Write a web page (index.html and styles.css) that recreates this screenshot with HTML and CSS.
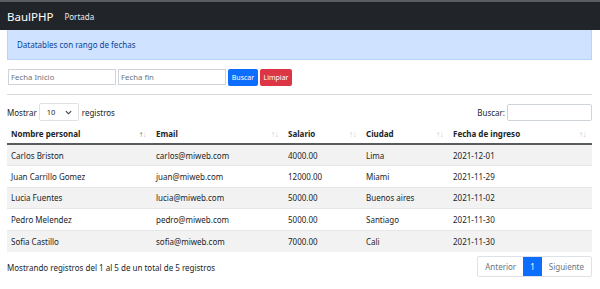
FILE: index.html
```html
<!DOCTYPE html>
<html lang="es">
<head>
<meta charset="utf-8">
<link rel="stylesheet" href="styles.css">
</head>
<body>
<nav class="navbar">
  <span class="brand">BaulPHP</span>
  <span class="nav-link">Portada</span>
</nav>
<div class="container">
  <div class="alert">Datatables con rango de fechas</div>
  <div class="filters">
    <input class="field" placeholder="Fecha Inicio">
    <input class="field" placeholder="Fecha fin">
    <button class="btn btn-primary">Buscar</button>
    <button class="btn btn-danger">Limpiar</button>
  </div>
  <hr class="sep">
  <div class="top-row">
    <div class="length">Mostrar <span class="select">10 <svg width="7" height="5" viewBox="0 0 8 5"><path d="M1 1l3 3 3-3" fill="none" stroke="#343a40" stroke-width="1.3"/></svg></span> registros</div>
    <div class="search">Buscar: <span class="search-input"></span></div>
  </div>
  <table class="table">
    <thead>
      <tr>
        <th class="c1"><span>Nombre personal</span><span class="sort active">↑<i>↓</i></span></th>
        <th class="c2"><span>Email</span><span class="sort">↑↓</span></th>
        <th class="c3"><span>Salario</span><span class="sort">↑↓</span></th>
        <th class="c4"><span>Ciudad</span><span class="sort">↑↓</span></th>
        <th class="c5"><span>Fecha de ingreso</span><span class="sort">↑↓</span></th>
      </tr>
    </thead>
    <tbody>
      <tr class="odd"><td>Carlos Briston</td><td>carlos@miweb.com</td><td>4000.00</td><td>Lima</td><td>2021-12-01</td></tr>
      <tr><td>Juan Carrillo Gomez</td><td>juan@miweb.com</td><td>12000.00</td><td>Miami</td><td>2021-11-29</td></tr>
      <tr class="odd"><td>Lucia Fuentes</td><td>lucia@miweb.com</td><td>5000.00</td><td>Buenos aires</td><td>2021-11-02</td></tr>
      <tr><td>Pedro Melendez</td><td>pedro@miweb.com</td><td>5000.00</td><td>Santiago</td><td>2021-11-30</td></tr>
      <tr class="odd"><td>Sofia Castillo</td><td>sofia@miweb.com</td><td>7000.00</td><td>Cali</td><td>2021-11-30</td></tr>
    </tbody>
  </table>
  <div class="bottom-row">
    <div class="info">Mostrando registros del 1 al 5 de un total de 5 registros</div>
    <div class="pagination">
      <span class="page">Anterior</span>
      <span class="page current">1</span>
      <span class="page">Siguiente</span>
    </div>
  </div>
</div>
</body>
</html>
```

FILE: styles.css
```css
* { box-sizing: border-box; }
html, body { margin: 0; padding: 0; }
body {
  font-family: "Noto Sans", "Open Sans", sans-serif;
  font-size: 8px;
  color: #212529;
  background: #fff;
  width: 600px;
  height: 289px;
  overflow: hidden;
}
.navbar {
  height: 30px;
  background: #212529;
  border-top: 2px solid #5a5d61;
  display: flex;
  align-items: center;
  padding: 0 7px;
}
.brand { color: #fff; font-size: 11.5px; margin-right: 11px; }
.nav-link { color: #e9ecef; font-size: 8px; }
.container { padding: 0 8px 0 7px; }
.alert {
  height: 30px;
  background: #cfe2ff;
  border: 1px solid #b6d4fe;
  border-top: none;
  color: #084298;
  display: flex;
  align-items: center;
  padding-left: 9px;
  font-size: 8px;
}
.filters {
  display: flex;
  align-items: center;
  gap: 2px;
  margin-top: 9px;
  height: 16px;
  padding-left: 1px;
}
.field {
  width: 108px;
  height: 16px;
  border: 1px solid #ced4da;
  font-family: inherit;
  font-size: 7.8px;
  padding: 0 2px;
  margin: 0;
  color: #212529;
  outline: none;
}
.field::placeholder { color: #6c757d; }
.btn {
  height: 17px;
  border: none;
  border-radius: 2px;
  font-family: inherit;
  font-size: 7px;
  color: #fff;
  padding: 0 3px;
  margin: 0;
}
.btn-primary { background: #0d6efd; width: 30px; }
.btn-danger { background: #dc3545; width: 32px; }
.sep {
  border: none;
  border-top: 1px solid #d6d8db;
  margin: 9px 0 0 0;
}
.top-row {
  display: flex;
  justify-content: space-between;
  align-items: center;
  margin-top: 8px;
  height: 18px;
}
.length { display: flex; align-items: center; }
.select {
  display: inline-flex;
  align-items: center;
  justify-content: space-between;
  width: 40px;
  height: 18px;
  border: 1px solid #dee2e6;
  border-radius: 2px;
  margin: 0 3px 0 2px;
  padding: 0 6px 0 7px;
  font-size: 7.5px;
}
.search { display: flex; align-items: center; }
.search-input {
  display: inline-block;
  width: 85px;
  height: 17px;
  border: 1px solid #ced4da;
  border-radius: 2px;
  margin-left: 2px;
}
.table {
  width: 585px;
  border-collapse: collapse;
  margin-top: 3px;
  table-layout: fixed;
}
.table th {
  height: 20px;
  text-align: left;
  font-weight: 700;
  padding: 0 4px;
  border-bottom: 2px solid #595c5f;
  position: relative;
}
.c1 { width: 145px; }
.c2 { width: 132px; }
.c3 { width: 78px; }
.c4 { width: 87px; }
.c5 { width: 143px; }
.sort {
  position: absolute;
  right: 6px;
  top: 4px;
  font-size: 8px;
  color: #c8c9ca;
  font-weight: 400;
  letter-spacing: -0.5px;
}
.sort.active { color: #555; }
.sort.active i { font-style: normal; color: #c8c9ca; }
.table td {
  height: 21.6px;
  padding: 0 4px;
  border-bottom: 1px solid #e6e7e8;
}
.table tbody tr:last-child td { border-bottom: none; }
.table tr.odd td { background: #f2f2f2; }
.bottom-row {
  display: flex;
  justify-content: space-between;
  align-items: center;
  margin-top: 4px;
}
.info { margin-top: 2px; }
.pagination { display: flex; border: 1px solid #dee2e6; border-radius: 2px; height: 21px; }
.page {
  display: flex;
  align-items: center;
  padding: 0 7px;
  color: #6c757d;
  font-size: 8px;
}
.page.current { background: #0d6efd; color: #fff; padding: 0 7px; }
```
